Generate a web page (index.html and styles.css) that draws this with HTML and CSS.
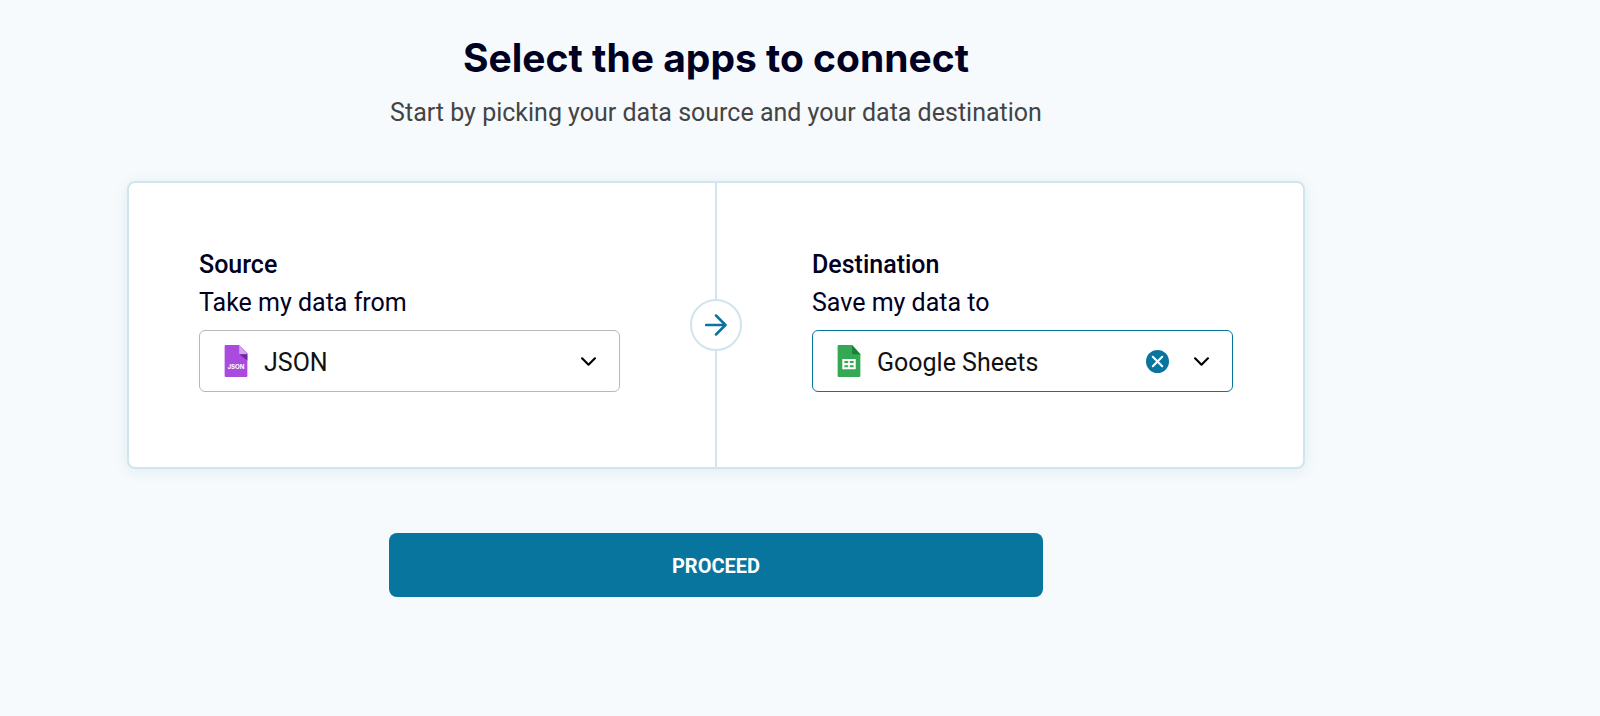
FILE: index.html
```html
<!doctype html>
<html lang="en">
<head>
 <meta charset="utf-8" />
 <meta name="viewport" content="width=device-width, initial-scale=1" />
 <title>Select the apps to connect</title>
 <link rel="stylesheet" href="styles.css">
</head>
<body>
 <main class="wrap">
 <header>
 <h1>Select the apps to connect</h1>
 <p>Start by picking your data source and your data destination</p>
 </header>

 <form class="setup">
 <div class="card">
 <section class="side source">
 <h2>Source</h2>
 <label for="source">Take my data from</label>
 <div class="picker">
 <svg class="appIcon" viewBox="0 0 22 31" aria-hidden="true">
 <path fill="#a94bde" d="M1 0h13l8 8v22a1 1 0 0 1-1 1H1a1 1 0 0 1-1-1V1a1 1 0 0 1 1-1z"/>
 <path fill="#d3a3ec" d="M14 0l8 9h-8z"/>
 <path fill="#6f2798" d="M14 9h8v6z"/>
 <text x="11" y="23" text-anchor="middle" class="iconText">JSON</text>
 </svg>
 <select id="source">
 <option>JSON</option>
 </select>
 <svg class="chevron" viewBox="0 0 14 8" aria-hidden="true"><path d="M1 1l6 6 6-6"/></svg>
 </div>
 </section>

 <section class="side destination">
 <h2>Destination</h2>
 <label for="destination">Save my data to</label>
 <div class="picker active">
 <svg class="appIcon" viewBox="0 0 22 31" aria-hidden="true">
 <path fill="#34a853" d="M1 0h13l8 9v21a1 1 0 0 1-1 1H1a1 1 0 0 1-1-1V1a1 1 0 0 1 1-1z"/>
 <path fill="#188038" d="M14 0l8 9h-8z"/>
 <path fill="#fff" fill-rule="evenodd" d="M4.500 13.500h13v10h-13zM6.500 15.500v2h3.700v-2zM11.800 15.500v2h3.700v-2zM6.500 19.500v2h3.700v-2zM11.800 19.500v2h3.700v-2z"/>
 </svg>
 <select id="destination">
 <option>Google Sheets</option>
 </select>
 <button class="clear" type="button" aria-label="Clear destination">
 <svg viewBox="0 0 22 22" aria-hidden="true"><path d="M6.500 6.500l9 9M15.500 6.500l-9 9"/></svg>
 </button>
 <svg class="chevron" viewBox="0 0 14 8" aria-hidden="true"><path d="M1 1l6 6 6-6"/></svg>
 </div>
 </section>

 <div class="arrow">
 <svg viewBox="0 0 22 22" aria-hidden="true"><path d="M1 11h19M11 1.500l9.500 9.500-9.500 9.500"/></svg>
 </div>
 </div>

 <button class="proceed" type="submit">PROCEED</button>
 </form>
 </main>
</body>
</html>
```
FILE: styles.css
```css
:root{
--bg:#f6fafc;
--blue:#08759f;
--line:#d2e4ed;
--ink:#000022;
--muted:#444;
}
*{box-sizing:border-box}
body{
margin:0;
padding:34px 168px 34px 0;
font-family:Roboto,"Liberation Sans",sans-serif;
font-size:25px;
background:var(--bg);
color:var(--ink);
}
.wrap{width:100%; max-width:1178px; margin:0 auto}
header{text-align:center}
h1{
margin:0;
font-family:Inter,"Liberation Sans",sans-serif;
font-size:39px; line-height:48px; font-weight:700;
}
header p{margin:15px 0 0; line-height:32px; color:var(--muted)}

.setup{display:flex; flex-direction:column; align-items:center; gap:64px; margin-top:52px}
.card{
position:relative;
display:grid; grid-template-columns:1fr 1fr;
width:100%;
background:#fff;
border:2px solid var(--line);
border-radius:8px;
box-shadow:0 2px 14px rgba(8,117,159,.1);
}
.side{display:flex; flex-direction:column; padding:63px 70px 75px}
.source{padding-right:95px; border-right:1px solid var(--line)}
.destination{padding-left:95px; border-left:1px solid var(--line)}
h2{margin:0; font-size:25px; line-height:38px; font-weight:500}
label{line-height:38px}

.picker{
display:flex; align-items:center;
height:62px;
margin-top:8px;
padding:0 23px 0 24px;
border:1px solid #b8b8b8;
border-radius:6px;
background:#fff;
}
.picker.active{border-color:var(--blue)}
.appIcon{flex:none; width:24px; height:32px}
.iconText{font:700 6px Inter,sans-serif; fill:#fff}
select{
flex:1; min-width:0;
height:100%;
margin-left:16px;
padding:2px 0 0;
appearance:none;
border:0; outline:none;
background:none;
font:inherit; color:#111;
cursor:pointer;
}
.chevron{
flex:none; width:15px; height:9px;
fill:none; stroke:#000; stroke-width:2; stroke-linecap:round; stroke-linejoin:round;
pointer-events:none;
}
.clear{
display:flex; flex:none;
width:23px; height:23px;
margin-right:25px;
padding:0;
border:0; border-radius:50%;
background:var(--blue);
cursor:pointer;
}
.clear svg{width:23px; height:23px; fill:none; stroke:#fff; stroke-width:2; stroke-linecap:round}

/* badge sits on the divider */
.arrow{
position:absolute; top:50%; left:50%;
transform:translate(-50%,-50%);
display:flex; align-items:center; justify-content:center;
width:52px; height:52px;
border:2px solid var(--line);
border-radius:50%;
background:#fff;
}
.arrow svg{width:22px; height:22px; fill:none; stroke:var(--blue); stroke-width:2.500; stroke-linecap:round; stroke-linejoin:round}

.proceed{
width:100%; max-width:654px; height:64px;
padding:2px 0 0;
border:0; border-radius:8px;
background:var(--blue);
color:#fff;
font-family:inherit; font-size:20px; font-weight:700;
cursor:pointer;
}
```
